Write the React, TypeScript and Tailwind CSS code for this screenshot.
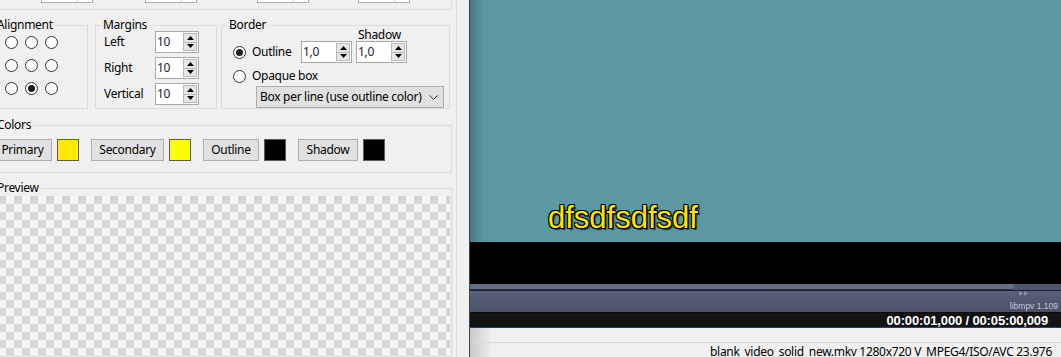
import React from 'react';

const Radio: React.FC<{ checked?: boolean }> = ({ checked = false }) => (
  <span className="flex h-[13px] w-[13px] shrink-0 items-center justify-center rounded-full border border-[#333333] bg-white">
    {checked && <span className="h-[7px] w-[7px] rounded-full bg-[#1f1f1f]" />}
  </span>
);

const Arrow: React.FC<{ up?: boolean }> = ({ up = false }) => (
  <svg width="7" height="4" viewBox="0 0 7 4">
    <path d={up ? 'M3.5 0L7 4H0z' : 'M0 0H7L3.5 4z'} fill="#000" />
  </svg>
);

const SpinBox: React.FC<{ value: string; width: string }> = ({ value, width }) => (
  <div className={`flex h-[22px] ${width} shrink-0 items-stretch border border-[#a9a9a9] bg-white`}>
    <span className="flex-1 pl-[1px] text-[12px] leading-[20px] text-[#1a1a30]">{value}</span>
    <div className="my-[1px] mr-[1px] flex w-[14px] flex-col">
      <span className="flex flex-1 items-center justify-center border border-[#b9b9b9] bg-[#e6e6e6]">
        <Arrow up />
      </span>
      <span className="flex flex-1 items-center justify-center border border-t-0 border-[#b9b9b9] bg-[#e6e6e6]">
        <Arrow />
      </span>
    </div>
  </div>
);

const Group: React.FC<{ title: string; className: string; children?: React.ReactNode }> = ({
  title,
  className,
  children,
}) => (
  <fieldset className={`shrink-0 border border-[#dcdcdc] ${className}`}>
    <legend className="ml-[5px] px-[2px] text-[12px] leading-[16px]">{title}</legend>
    {children}
  </fieldset>
);

const ColorButton: React.FC<{ label: string; width: string; first?: boolean }> = ({ label, width, first }) => (
  <button
    className={`flex h-[22px] ${width} ${first ? '' : 'ml-[12px]'} shrink-0 items-center justify-center border border-[#adadad] bg-[#e1e1e1] text-[12px] leading-none text-black`}
  >
    {label}
  </button>
);

const Swatch: React.FC<{ color: string }> = ({ color }) => (
  <span className={`ml-[5px] h-[22px] w-[22px] shrink-0 border border-[#5a5a5a] ${color}`} />
);

const TopInput: React.FC<{ ml: string }> = ({ ml }) => (
  <div className={`${ml} flex h-[3px] w-[52px] border-x border-b border-[#adadad] bg-white`}>
    <span className="ml-auto h-full w-[15px] border-l border-[#d0d0d0]" />
  </div>
);

export default function App() {
  return (
    <div className="flex h-[357px] w-[1061px] overflow-hidden bg-[#f0f0f0] font-['Noto_Sans',sans-serif] tracking-[-0.3px] text-black">
      {/* style editor */}
      <div className="w-[456px] shrink-0 overflow-hidden">
        <div className="ml-[-11px] flex w-[470px] flex-col">
          <div className="flex h-[10px] w-[463px] border-r border-b border-[#dcdcdc]">
            <TopInput ml="ml-[52px]" />
            <TopInput ml="ml-[52px]" />
            <TopInput ml="ml-[60px]" />
            <TopInput ml="ml-[49px]" />
          </div>

          <div className="mt-[7px] flex">
            <Group title="Alignment" className="h-[92px] w-[99px]">
              <div className="grid grid-cols-[repeat(3,13px)] gap-x-[7px] gap-y-[10px] pt-[3px] pl-[15px]">
                <Radio />
                <Radio />
                <Radio />
                <Radio />
                <Radio />
                <Radio />
                <Radio />
                <Radio checked />
                <Radio />
              </div>
            </Group>

            <Group title="Margins" className="ml-[7px] h-[92px] w-[122px]">
              <div className="mt-[-2px] flex flex-col gap-[4px] pl-[8px] text-[12px]">
                {['Left', 'Right', 'Vertical'].map((label) => (
                  <div key={label} className="flex h-[22px] items-center">
                    <span className="w-[51px]">{label}</span>
                    <SpinBox value="10" width="w-[44px]" />
                  </div>
                ))}
              </div>
            </Group>

            <Group title="Border" className="ml-[4px] h-[92px] w-[229px]">
              <div className="flex flex-col text-[12px]">
                <div className="mt-[-4px] flex items-end pl-[11px]">
                  <label className="flex h-[22px] w-[68px] items-center gap-[6px]">
                    <Radio checked />
                    Outline
                  </label>
                  <SpinBox value="1,0" width="w-[51px]" />
                  <div className="ml-[4px] flex flex-col">
                    <span className="pl-[2px] leading-[12px]">Shadow</span>
                    <SpinBox value="1,0" width="w-[51px]" />
                  </div>
                </div>
                <label className="mt-[5px] flex h-[16px] items-center gap-[6px] pl-[11px]">
                  <Radio />
                  Opaque box
                </label>
                <div className="mt-[2px] ml-[34px] flex h-[22px] w-[188px] items-center justify-between border border-[#adadad] bg-[#e1e1e1] pr-[5px] pl-[3px] whitespace-nowrap">
                  <span>Box per line (use outline color)</span>
                  <svg width="9" height="5" viewBox="0 0 9 5" className="shrink-0">
                    <path d="M0.5 0.5L4.5 4.5L8.5 0.5" fill="none" stroke="#333" strokeWidth="1" />
                  </svg>
                </div>
              </div>
            </Group>
          </div>

          <Group title="Colors" className="mt-[8px] h-[56px] w-[463px]">
            <div className="flex items-center pt-[6px] pl-[3px]">
              <ColorButton label="Primary" width="w-[59px]" first />
              <Swatch color="bg-[#ffea00]" />
              <ColorButton label="Secondary" width="w-[73px]" />
              <Swatch color="bg-[#ffff00]" />
              <ColorButton label="Outline" width="w-[56px]" />
              <Swatch color="bg-black" />
              <ColorButton label="Shadow" width="w-[60px]" />
              <Swatch color="bg-black" />
            </div>
          </Group>

          <Group title="Preview" className="mt-[7px] h-[220px] w-[463px]">
            <div className="mr-[1px] h-[200px] bg-[repeating-conic-gradient(#d5d5d5_0%_25%,#f6f6f6_0%_50%)] bg-[length:16px_16px]" />
          </Group>
        </div>
      </div>

      <div className="w-px shrink-0 bg-[#dadada]" />
      <div className="w-[12px] shrink-0" />

      {/* mpv player */}
      <div className="flex h-[357px] flex-1 flex-col border-l border-[#39474b]">
        <div className="flex h-[242px] shrink-0 flex-col justify-end bg-[linear-gradient(to_right,#457a83,#5c98a1_14px)] pb-[9px] pl-[78px]">
          <span className="font-['Liberation_Sans',Arial,sans-serif] text-[31px] leading-[30px] tracking-normal text-[#ffe600] [text-shadow:-1px_-1px_0_#000,1px_-1px_0_#000,-1px_1px_0_#000,1px_1px_0_#000,0_1px_0_#000,1px_0_0_#000,2px_2px_1px_rgba(0,0,0,0.7)]">
            dfsdfsdfsdf
          </span>
        </div>
        <div className="h-[42px] shrink-0 bg-black" />
        <div className="flex h-[6px] shrink-0 bg-[#4d5570]">
          <div className="flex-1 rounded-r-full border-b border-[#2a2e3a] bg-[#666d8a]" />
          <div className="w-[47px]" />
        </div>
        <div className="h-px shrink-0 bg-[#1f222b]" />
        <div className="flex h-[21px] shrink-0 flex-col items-end bg-[linear-gradient(to_bottom,#5a627b,#495166)] font-['Liberation_Sans',Arial,sans-serif] tracking-normal">
          <div className="pr-[33px]">
            <svg width="9" height="5" viewBox="0 0 9 5" className="block">
              <path d="M0 0L4 2.5L0 5z M5 0L9 2.5L5 5z" fill="#8990a6" />
            </svg>
          </div>
          <span className="mt-auto pr-[3px] pb-[1px] text-[8.5px] leading-[10px] text-[#c3c7d3]">libmpv 1.109</span>
        </div>
        <div className="flex h-[15px] shrink-0 items-center justify-end border-t border-[#0a0a0a] bg-[#131313] pr-[13px] font-['Liberation_Sans',Arial,sans-serif] text-[13px] leading-none font-bold tracking-[-0.15px] text-white">
          00:00:01,000 / 00:05:00,009
        </div>
        <div className="h-px shrink-0 bg-[#30406a]" />
        <div className="flex min-h-0 flex-1 flex-col overflow-hidden bg-[linear-gradient(to_right,#c9c9c9,#f0f0f0_22px)]">
          <div className="h-[15px] shrink-0 border-b border-[#dadada]" />
          <div className="flex shrink-0 justify-end pt-[1px] pr-[9px] text-[12px] leading-[16px] whitespace-nowrap">
            blank_video_solid_new.mkv 1280x720 V_MPEG4/ISO/AVC 23.976
          </div>
        </div>
      </div>
    </div>
  );
}
